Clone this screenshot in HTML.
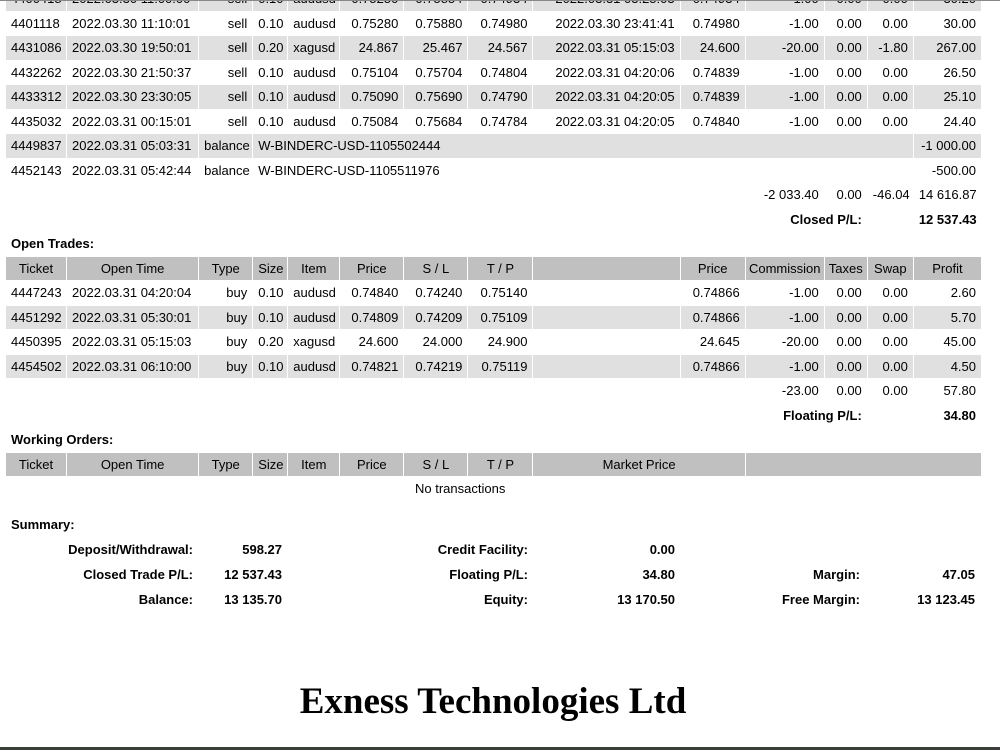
<!DOCTYPE html>
<html><head><meta charset="utf-8"><style>
html,body{margin:0;padding:0;background:#fff;width:1000px;height:750px;overflow:hidden;position:relative;font-family:"Liberation Sans",Arial,sans-serif;font-size:13px;color:#000}
table.t{position:absolute;left:5px;top:-14px;border-collapse:separate;border-spacing:1px;table-layout:fixed;width:977px}
table.t td{height:23.5px;padding:0 5px;white-space:nowrap;overflow:hidden;box-sizing:border-box;line-height:23.5px}
tr.s td{background:#e0e0e0}
tr.h td{background:#c0c0c0;text-align:center}
td.r{text-align:right}
td.b{font-weight:bold}
td.sec{font-weight:bold;padding-left:5px}
.sum{position:absolute;font-weight:bold;text-align:right;line-height:16px}
.title{position:absolute;left:0;width:986px;top:680px;text-align:center;font-family:"Liberation Serif","Times New Roman",serif;font-weight:bold;font-size:37px;line-height:44px}
.bot{position:absolute;left:0;top:747px;width:1000px;height:3px;background:#3a3f3a}
.topl{position:absolute;left:0;top:0;width:1000px;height:1px;background:#888}
</style></head><body>
<table class="t">
<colgroup><col style="width:60px"><col style="width:131px"><col style="width:53px"><col style="width:34px"><col style="width:51px"><col style="width:63px"><col style="width:63px"><col style="width:64px"><col style="width:146px"><col style="width:64px"><col style="width:78px"><col style="width:42px"><col style="width:45px"><col style="width:67px"></colgroup>
<tr class="s"><td>4400418</td><td>2022.03.30 11:00:00</td><td class="r">sell</td><td>0.10</td><td>audusd</td><td class="r">0.75250</td><td class="r">0.75854</td><td class="r">0.74934</td><td class="r">2022.03.31 03:25:03</td><td class="r">0.74934</td><td class="r">-1.00</td><td class="r">0.00</td><td class="r">0.00</td><td class="r">30.20</td></tr>
<tr><td>4401118</td><td>2022.03.30 11:10:01</td><td class="r">sell</td><td>0.10</td><td>audusd</td><td class="r">0.75280</td><td class="r">0.75880</td><td class="r">0.74980</td><td class="r">2022.03.30 23:41:41</td><td class="r">0.74980</td><td class="r">-1.00</td><td class="r">0.00</td><td class="r">0.00</td><td class="r">30.00</td></tr>
<tr class="s"><td>4431086</td><td>2022.03.30 19:50:01</td><td class="r">sell</td><td>0.20</td><td>xagusd</td><td class="r">24.867</td><td class="r">25.467</td><td class="r">24.567</td><td class="r">2022.03.31 05:15:03</td><td class="r">24.600</td><td class="r">-20.00</td><td class="r">0.00</td><td class="r">-1.80</td><td class="r">267.00</td></tr>
<tr><td>4432262</td><td>2022.03.30 21:50:37</td><td class="r">sell</td><td>0.10</td><td>audusd</td><td class="r">0.75104</td><td class="r">0.75704</td><td class="r">0.74804</td><td class="r">2022.03.31 04:20:06</td><td class="r">0.74839</td><td class="r">-1.00</td><td class="r">0.00</td><td class="r">0.00</td><td class="r">26.50</td></tr>
<tr class="s"><td>4433312</td><td>2022.03.30 23:30:05</td><td class="r">sell</td><td>0.10</td><td>audusd</td><td class="r">0.75090</td><td class="r">0.75690</td><td class="r">0.74790</td><td class="r">2022.03.31 04:20:05</td><td class="r">0.74839</td><td class="r">-1.00</td><td class="r">0.00</td><td class="r">0.00</td><td class="r">25.10</td></tr>
<tr><td>4435032</td><td>2022.03.31 00:15:01</td><td class="r">sell</td><td>0.10</td><td>audusd</td><td class="r">0.75084</td><td class="r">0.75684</td><td class="r">0.74784</td><td class="r">2022.03.31 04:20:05</td><td class="r">0.74840</td><td class="r">-1.00</td><td class="r">0.00</td><td class="r">0.00</td><td class="r">24.40</td></tr>
<tr class="s"><td>4449837</td><td>2022.03.31 05:03:31</td><td class="r">balance</td><td colspan="10">W-BINDERC-USD-1105502444</td><td class="r">-1 000.00</td></tr>
<tr><td>4452143</td><td>2022.03.31 05:42:44</td><td class="r">balance</td><td colspan="10">W-BINDERC-USD-1105511976</td><td class="r">-500.00</td></tr>
<tr><td colspan="10"></td><td class="r">-2 033.40</td><td class="r">0.00</td><td class="r">-46.04</td><td class="r">14 616.87</td></tr>
<tr><td colspan="10"></td><td colspan="2" class="r b">Closed P/L:</td><td></td><td class="r b">12 537.43</td></tr>
<tr><td colspan="14" class="sec">Open Trades:</td></tr>
<tr class="h"><td>Ticket</td><td>Open Time</td><td>Type</td><td>Size</td><td>Item</td><td>Price</td><td>S / L</td><td>T / P</td><td></td><td>Price</td><td style="padding:0">Commission</td><td style="padding:0">Taxes</td><td>Swap</td><td>Profit</td></tr>
<tr><td>4447243</td><td>2022.03.31 04:20:04</td><td class="r">buy</td><td>0.10</td><td>audusd</td><td class="r">0.74840</td><td class="r">0.74240</td><td class="r">0.75140</td><td></td><td class="r">0.74866</td><td class="r">-1.00</td><td class="r">0.00</td><td class="r">0.00</td><td class="r">2.60</td></tr>
<tr class="s"><td>4451292</td><td>2022.03.31 05:30:01</td><td class="r">buy</td><td>0.10</td><td>audusd</td><td class="r">0.74809</td><td class="r">0.74209</td><td class="r">0.75109</td><td></td><td class="r">0.74866</td><td class="r">-1.00</td><td class="r">0.00</td><td class="r">0.00</td><td class="r">5.70</td></tr>
<tr><td>4450395</td><td>2022.03.31 05:15:03</td><td class="r">buy</td><td>0.20</td><td>xagusd</td><td class="r">24.600</td><td class="r">24.000</td><td class="r">24.900</td><td></td><td class="r">24.645</td><td class="r">-20.00</td><td class="r">0.00</td><td class="r">0.00</td><td class="r">45.00</td></tr>
<tr class="s"><td>4454502</td><td>2022.03.31 06:10:00</td><td class="r">buy</td><td>0.10</td><td>audusd</td><td class="r">0.74821</td><td class="r">0.74219</td><td class="r">0.75119</td><td></td><td class="r">0.74866</td><td class="r">-1.00</td><td class="r">0.00</td><td class="r">0.00</td><td class="r">4.50</td></tr>
<tr><td colspan="10"></td><td class="r">-23.00</td><td class="r">0.00</td><td class="r">0.00</td><td class="r">57.80</td></tr>
<tr><td colspan="10"></td><td colspan="2" class="r b">Floating P/L:</td><td></td><td class="r b">34.80</td></tr>
<tr><td colspan="14" class="sec">Working Orders:</td></tr>
<tr class="h"><td>Ticket</td><td>Open Time</td><td>Type</td><td>Size</td><td>Item</td><td>Price</td><td>S / L</td><td>T / P</td><td colspan="2">Market Price</td><td colspan="4"></td></tr>
<tr><td colspan="14" style="padding-left:409px">No transactions</td></tr>
</table>

<div class="sum" style="left:11px;top:517px;text-align:left">Summary:</div>
<div class="sum" style="left:0;width:193px;top:542px">Deposit/Withdrawal:</div>
<div class="sum" style="left:200px;width:82px;top:542px">598.27</div>
<div class="sum" style="left:0;width:193px;top:567px">Closed Trade P/L:</div>
<div class="sum" style="left:200px;width:82px;top:567px">12 537.43</div>
<div class="sum" style="left:0;width:193px;top:592px">Balance:</div>
<div class="sum" style="left:200px;width:82px;top:592px">13 135.70</div>

<div class="sum" style="left:300px;width:228px;top:542px">Credit Facility:</div>
<div class="sum" style="left:560px;width:115px;top:542px">0.00</div>
<div class="sum" style="left:300px;width:228px;top:567px">Floating P/L:</div>
<div class="sum" style="left:560px;width:115px;top:567px">34.80</div>
<div class="sum" style="left:300px;width:228px;top:592px">Equity:</div>
<div class="sum" style="left:560px;width:115px;top:592px">13 170.50</div>

<div class="sum" style="left:700px;width:160px;top:567px">Margin:</div>
<div class="sum" style="left:880px;width:95px;top:567px">47.05</div>
<div class="sum" style="left:700px;width:160px;top:592px">Free Margin:</div>
<div class="sum" style="left:880px;width:95px;top:592px">13 123.45</div>

<div class="title">Exness Technologies Ltd</div>
<div class="topl"></div>
<div class="bot"></div>
</body></html>
